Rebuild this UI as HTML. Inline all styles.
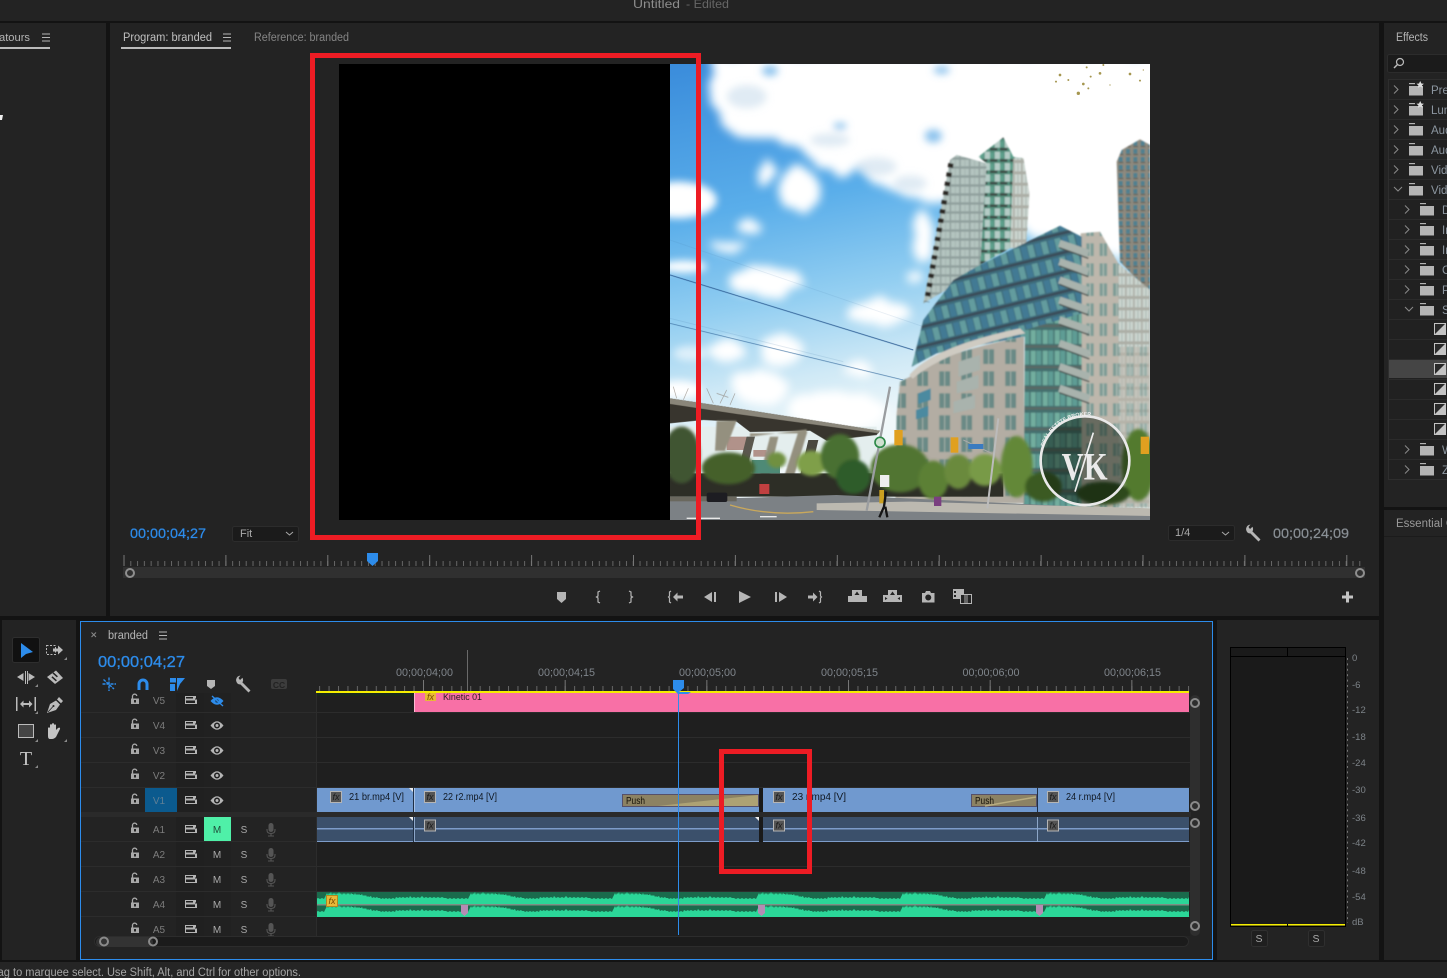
<!DOCTYPE html>
<html><head><meta charset="utf-8"><title>Untitled - Edited</title>
<style>
html,body{margin:0;padding:0;background:#131313;overflow:hidden}
svg{display:block;font-family:"Liberation Sans",sans-serif}
</style></head><body>
<svg width="1447" height="978" viewBox="0 0 1447 978" xmlns="http://www.w3.org/2000/svg">
<defs>
<pattern id="tMin" patternUnits="userSpaceOnUse" x="423" y="686" width="9.445" height="6"><rect width="1" height="5" fill="#666"/></pattern>
<pattern id="tMaj" patternUnits="userSpaceOnUse" x="423" y="680" width="141.67" height="12"><rect width="1" height="12" fill="#777"/></pattern>
<pattern id="mMin" patternUnits="userSpaceOnUse" x="123.5" y="561" width="6.79" height="6"><rect width="1" height="5" fill="#666"/></pattern>
<pattern id="mMaj" patternUnits="userSpaceOnUse" x="123.5" y="555" width="101.9" height="12"><rect width="1" height="11" fill="#777"/></pattern>
<pattern id="dots" patternUnits="userSpaceOnUse" x="0" y="658" width="3" height="5.4"><rect width="2" height="2" fill="#777"/></pattern>
<pattern id="wave" patternUnits="userSpaceOnUse" x="326" y="892" width="144" height="25">
<rect width="144" height="25" fill="#1a6a4c"/>
<path d="M0 12V3L1 1 2 3 3 1 4 2 5 0 6 3 7 1 8 2 9 1 10 3 11 1 12 2 13 0 14 2 15 1 16 3 17 1 18 2 19 1 20 3 21 1 22 2 23 1 24 3 25 1 26 2 27 2 28 3 29 1 30 3 31 2 32 3 33 2 34 3 35 3 36 2 37 4 38 3 39 4 40 3 41 5 42 4 43 5 45 4 46 6 48 5 49 6 51 5 52 6 54 6 55 7 57 6 58 7 60 6 62 7 63 6 65 7 67 6 69 7 70 5 72 6 74 5 75 6 77 5 79 6 81 5 83 6 84 4 86 6 88 5 90 6 92 5 94 6 96 4 98 6 100 5 102 6 104 5 106 6 108 5 110 6 112 5 114 6 116 5 118 6 120 6 122 7 124 6 126 7 128 6 130 7 132 6 134 7 136 6 138 7 140 6 142 7 143 5 144 3V12Z" fill="#2bd698"/>
<path d="M0 25V16L1 14 2 16 3 14 4 15 5 13 6 16 7 14 8 15 9 14 10 16 11 14 12 15 13 13 14 15 15 14 16 16 17 14 18 15 19 14 20 16 21 14 22 15 23 14 24 16 25 14 26 15 27 15 28 16 29 14 30 16 31 15 32 16 33 15 34 16 35 16 36 15 37 17 38 16 39 17 40 16 41 18 42 17 43 18 45 17 46 19 48 18 49 19 51 18 52 19 54 19 55 20 57 19 58 20 60 19 62 20 63 19 65 20 67 19 69 20 70 18 72 19 74 18 75 19 77 18 79 19 81 18 83 19 84 17 86 19 88 18 90 19 92 18 94 19 96 17 98 19 100 18 102 19 104 18 106 19 108 18 110 19 112 18 114 19 116 18 118 19 120 19 122 20 124 19 126 20 128 19 130 20 132 19 134 20 136 19 138 20 140 19 142 20 143 18 144 16V25Z" fill="#2bd698"/>
</pattern>
<linearGradient id="sky" gradientUnits="userSpaceOnUse" x1="60" y1="0" x2="280" y2="1150">
<stop offset="0" stop-color="#3a8cdb"/><stop offset=".4" stop-color="#5aaeea"/><stop offset=".65" stop-color="#92cef1"/><stop offset=".85" stop-color="#cfe9f6"/><stop offset="1" stop-color="#f0f8fa"/>
</linearGradient>
<filter id="cl" filterUnits="userSpaceOnUse" x="-100" y="-100" width="1700" height="1600" color-interpolation-filters="sRGB">
 <feTurbulence type="fractalNoise" baseFrequency=".014" numOctaves="3" seed="4" result="n"/>
 <feDisplacementMap in="SourceGraphic" in2="n" scale="45" xChannelSelector="R" yChannelSelector="G"/>
 <feGaussianBlur stdDeviation="14"/>
</filter>
<filter id="b8" x="-40%" y="-40%" width="180%" height="180%"><feGaussianBlur stdDeviation="12"/></filter>
<filter id="b3" x="-15%" y="-15%" width="130%" height="130%"><feGaussianBlur stdDeviation="5"/></filter>
<filter id="b1" x="-5%" y="-5%" width="110%" height="110%"><feGaussianBlur stdDeviation="2"/></filter>
<pattern id="pGray" patternUnits="userSpaceOnUse" width="29" height="27"><rect width="29" height="27" fill="#8f9f9c"/><rect x="2" y="2" width="25" height="20" fill="#b4c4c0"/><rect x="14" y="2" width="1.500" height="20" fill="#98a8a4"/></pattern>
<pattern id="pTeal" patternUnits="userSpaceOnUse" width="30" height="34"><rect width="30" height="34" fill="#55917e"/><rect x="14" y="3" width="16" height="22" fill="#b5ccc6"/><rect x="0" y="6" width="10" height="16" fill="#5da08c"/><rect y="26" width="22" height="7" fill="#3a443f"/></pattern>
<pattern id="pFar" patternUnits="userSpaceOnUse" width="22" height="24"><rect width="22" height="24" fill="#8f8a7e"/><rect x="4" y="3" width="12" height="14" fill="#4f8090"/><rect x="4" y="18" width="14" height="3" fill="#5c5850"/></pattern>
<pattern id="pGlass" patternUnits="userSpaceOnUse" width="42" height="57" patternTransform="rotate(-14)"><rect width="42" height="57" fill="#3e6c7c"/><rect x="2" y="2" width="18" height="38" fill="#437a94"/><rect x="22" y="2" width="18" height="38" fill="#639c9e"/><rect y="44" width="42" height="8" fill="#3a4c58"/></pattern>
<pattern id="pGlass2" patternUnits="userSpaceOnUse" width="36" height="62"><rect width="36" height="62" fill="#456f6e"/><rect x="2" y="4" width="15" height="42" fill="#72ae9f"/><rect x="19" y="4" width="15" height="42" fill="#5f9c94"/><rect y="50" width="36" height="7" fill="#5c6965"/></pattern>
<pattern id="pWall" patternUnits="userSpaceOnUse" width="66" height="66"><rect width="66" height="66" fill="#b3ada3"/><rect x="16" y="10" width="32" height="44" fill="#6a8a86"/><rect x="31" y="10" width="2" height="44" fill="#c8c6bc"/></pattern>
<pattern id="pCon" patternUnits="userSpaceOnUse" width="40" height="60"><rect width="40" height="60" fill="#bdb7ac"/><rect x="9" y="10" width="22" height="38" fill="#7e9c96"/><rect x="19" y="10" width="2" height="38" fill="#d4d4cc"/></pattern>
<pattern id="pFr" patternUnits="userSpaceOnUse" width="24" height="34"><rect width="24" height="34" fill="#acaea6"/><rect x="2" y="3" width="19" height="25" fill="#ccd6d0"/><rect x="11" y="3" width="1.500" height="25" fill="#8a9a96"/></pattern>
<clipPath id="ph"><rect x="0" y="12" width="1440" height="1368"/></clipPath>

<g id="lock"><path d="M-2.500 0V-2.300A2 2 0 0 1 1.800 -3" fill="none" stroke="#a8a8a8" stroke-width="1.300"/><rect x="-4" y="-.5" width="8" height="5.500" fill="#a8a8a8"/><rect x="-1" y="1" width="2" height="2.500" fill="#232323"/></g>
<g id="sync"><path d="M-5.500 -3H3.500V-.5H-5.500ZM-5.500 .5H5.500V4H-5.500Z" fill="none" stroke="#b5b5b5"/><rect x="2" y="-3.500" width="3" height="2.500" fill="#b5b5b5"/><rect x="4" y=".5" width="2" height="3.500" fill="#b5b5b5"/></g>
<g id="eye"><path d="M-6.500 0Q0 -8.500 6.500 0Q0 8.500 -6.500 0Z" fill="#b5b5b5"/><circle r="3" fill="#222"/><circle r="1.500" fill="#b5b5b5"/></g>
<g id="mic"><rect x="-2.500" y="-6" width="5" height="9" rx="2.500" fill="#555"/><path d="M-4 0V1Q-4 4.500 0 4.500T4 1V0M0 4.500V7M-3 7H3" fill="none" stroke="#555" stroke-width="1.100"/></g>
<g id="fold"><rect x="0" y="2" width="14" height="9.500" fill="#b5b5b5"/><rect x="0" y="-1" width="6" height="1.200" fill="#b5b5b5"/></g>
<g id="trans"><rect x=".5" y=".5" width="11" height="11" fill="#2a2a2a" stroke="#c4c4c4"/><path d="M1 11L11 1V11Z" fill="#c4c4c4"/></g>
<g id="fxg"><rect x="-5.500" y="-5.500" width="11" height="11" fill="#555" stroke="#b5b5b5"/><text x="0" y="3" text-anchor="middle" font-size="9" font-style="italic" fill="#1a1a1a">fx</text></g>
<path id="wr" d="M-1.500 -5.500L-3.500 -3 -2 -1 .5 -3.200Q1.800 -.3 .3 1.300L8.500 9.500 6.500 11.500 -1.500 3.500Q-5.500 3.500 -6 -1Q-5.500 -5 -1.500 -5.500Z" fill="#b5b5b5"/>
</defs>

<rect width="1447" height="978" fill="#131313"/>
<rect width="1447" height="21" fill="#232323"/>
<text x="633" y="8" font-size="12" fill="#8d8d8d" textLength="47" lengthAdjust="spacingAndGlyphs">Untitled</text>
<text x="686" y="8" font-size="12" fill="#666" textLength="43" lengthAdjust="spacingAndGlyphs">- Edited</text>

<rect x="0" y="23" width="106" height="593" fill="#232323"/>
<rect x="110" y="23" width="1269" height="593" fill="#232323"/>
<rect x="1384" y="23" width="63" height="484" fill="#232323"/>
<rect x="1384" y="510" width="63" height="450" fill="#232323"/>
<rect x="2" y="620" width="74" height="340" fill="#232323"/>
<rect x="1217" y="620" width="162" height="340" fill="#232323"/>
<rect x="0" y="962" width="1447" height="16" fill="#252525"/>

<text x="-1" y="41" font-size="11" fill="#b5b5b5" textLength="31" lengthAdjust="spacingAndGlyphs">atours</text>
<path d="M42 34H50M42 37.500H50M42 41H50" stroke="#b5b5b5" stroke-width="1"/>
<rect x="0" y="47" width="50" height="2" fill="#bbb"/>
<path d="M0 115H3L2 120H0Z" fill="#eee"/>

<text x="123" y="41" font-size="11.500" fill="#c0c0c0" textLength="89" lengthAdjust="spacingAndGlyphs">Program: branded</text>
<path d="M223 34H231M223 37.500H231M223 41H231" stroke="#b5b5b5" stroke-width="1"/>
<rect x="121" y="47" width="110" height="2" fill="#bbb"/>
<text x="254" y="41" font-size="11.500" fill="#858585" textLength="95" lengthAdjust="spacingAndGlyphs">Reference: branded</text>

<!-- video -->
<rect x="339" y="64" width="331" height="456" fill="#000"/>
<g transform="translate(670 60) scale(.33333)" clip-path="url(#ph)">
 <rect x="0" y="12" width="1440" height="1368" fill="url(#sky)"/>
 <!-- cloud layers -->
 <g filter="url(#cl)" fill="#fff">
  <path d="M130 -20H1500V640L1070 520 960 460 830 430 760 430 650 390 570 320 500 350 430 300 330 230 190 230 120 120Z"/>
  <ellipse cx="390" cy="385" rx="60" ry="70"/><ellipse cx="285" cy="335" rx="25" ry="36"/>
  <ellipse cx="235" cy="500" rx="34" ry="20"/>
  <ellipse cx="170" cy="555" rx="52" ry="18"/><ellipse cx="290" cy="665" rx="105" ry="50"/>
  <ellipse cx="630" cy="755" rx="90" ry="42"/>
  <ellipse cx="755" cy="530" rx="38" ry="75"/><ellipse cx="740" cy="650" rx="30" ry="18"/>
  <ellipse cx="335" cy="870" rx="66" ry="44"/><ellipse cx="165" cy="875" rx="60" ry="32"/>
  <ellipse cx="265" cy="985" rx="85" ry="55"/><ellipse cx="560" cy="925" rx="44" ry="16"/>
  <ellipse cx="500" cy="1050" rx="150" ry="55"/>
 </g>
 <g filter="url(#b8)">
  <g fill="#fff"><ellipse cx="25" cy="420" rx="115" ry="55"/><ellipse cx="40" cy="620" rx="70" ry="18"/><ellipse cx="25" cy="990" rx="70" ry="28"/><ellipse cx="60" cy="880" rx="50" ry="22" opacity=".6"/></g>
  <g fill="#5aa8e6" opacity=".7"><ellipse cx="790" cy="228" rx="26" ry="20"/><ellipse cx="815" cy="30" rx="24" ry="12"/><ellipse cx="510" cy="198" rx="20" ry="10"/><ellipse cx="300" cy="32" rx="24" ry="16"/></g>
  <g fill="#c2d8ea" opacity=".5"><ellipse cx="230" cy="110" rx="60" ry="35"/><ellipse cx="480" cy="240" rx="60" ry="20"/><ellipse cx="620" cy="320" rx="60" ry="28"/><ellipse cx="720" cy="370" rx="50" ry="24"/></g>
 </g>
 <g fill="none" stroke="#4a78a8">
  <path d="M0 645L730 870" stroke-width="2.500" stroke="#2f5f95"/><path d="M0 790L700 960" stroke-width="2" stroke="#3a6ea0"/>
  <path d="M0 775L520 905" stroke-width="1" opacity=".45"/><path d="M0 540L760 800" stroke-width="1" opacity=".35"/>
 </g>
 <!-- top right branches -->
 <g fill="#a5964f">
  <circle cx="1170" cy="45" r="4"/><circle cx="1158" cy="65" r="3"/><circle cx="1195" cy="60" r="3"/><circle cx="1225" cy="100" r="5"/><circle cx="1240" cy="72" r="4"/><circle cx="1255" cy="85" r="3"/><circle cx="1262" cy="50" r="3"/><circle cx="1250" cy="22" r="3"/><circle cx="1290" cy="40" r="4"/><circle cx="1300" cy="15" r="3"/><circle cx="1320" cy="75" r="2"/><circle cx="1380" cy="42" r="4"/><circle cx="1410" cy="62" r="3"/><circle cx="1420" cy="30" r="2"/>
 </g>
 <!-- bare trees -->
 <g stroke="#8b8278" stroke-width="2" fill="none" opacity=".7"><path d="M20 1015L10 980M40 1020L55 985M130 1030L110 985M150 1030L170 990M180 1035L195 1000M140 1000L175 1012"/></g>

 <g filter="url(#b1)">
 <path d="M1340 305L1355 270 1410 238 1440 255V700L1350 605Z" fill="url(#pFar)"/>
 <path d="M925 290L1000 232 1030 290 1060 295 1078 400 1068 560 1020 565 920 620 950 310Z" fill="url(#pTeal)"/>
 <path d="M1030 295L1060 295 1078 400 1068 560 1020 565Z" fill="url(#pFr)"/>
 <path d="M860 285L950 310 930 620 845 680 760 730 800 520 840 300Z" fill="url(#pGray)"/>
 <path d="M843 310L770 725" stroke="#2a2622" stroke-width="16" stroke-dasharray="13 15" fill="none"/>
 <path d="M1345 610L1440 690V1345H1345Z" fill="url(#pFr)"/>
 <rect x="1345" y="860" width="95" height="480" fill="url(#pCon)" opacity=".55"/>
 <path d="M1232 520L1290 515 1345 610V1345H1232Z" fill="url(#pCon)"/>
 <path d="M725 920L760 780 850 660 920 620 1170 497 1235 530V830H1060L800 880Z" fill="url(#pGlass)"/>
 <path d="M1065 810L1235 760V1340H1060Z" fill="url(#pGlass2)"/>
 <g stroke="#a9b3ad" stroke-width="22" fill="none">
  <path d="M1168 550L1255 580M1168 605L1255 635M1168 660L1255 692M1168 720L1255 750M1168 780L1258 810M1168 850L1258 882M1168 920L1258 950M1168 985L1258 1015"/>
 </g>
 <g stroke="#48504e" stroke-width="4" fill="none">
  <path d="M1168 563L1255 595M1168 618L1255 650M1168 673L1255 707M1168 733L1255 765M1168 793L1258 825M1168 863L1258 897M1168 933L1258 965M1168 998L1258 1030"/>
 </g>
 <path d="M690 965L720 950Q800 880 1062 830V1330H676L680 1060Z" fill="url(#pWall)"/>
 <path d="M718 945Q790 860 1050 805L1066 820Q830 870 728 956Z" fill="#cfcbc2"/>
 <g fill="#a9b3ad"><path d="M865 905L930 885V930L865 950Z"/><path d="M860 965L925 945V985L860 1000Z"/><path d="M850 1025L915 1005V1045L850 1060Z"/></g>
 <g fill="#4b8aa0"><path d="M745 1000L782 985V1020L745 1032Z"/><path d="M738 1050L775 1038V1068L738 1078Z"/></g>
 </g>

 <!-- sky patch under overpass -->
 <rect x="0" y="1100" width="620" height="120" fill="#e4eeee"/>
 <g fill="#9c6c60" opacity=".7"><rect x="170" y="1130" width="60" height="40"/><rect x="250" y="1170" width="40" height="20"/></g>
 <!-- overpass -->
 <path d="M0 1015L200 1045 630 1112 620 1125 470 1142 420 1112 240 1116 200 1085 100 1080 0 1090Z" fill="#38352e"/>
 <path d="M0 1015L200 1045 630 1112 626 1120 200 1062 0 1032Z" fill="#8a867a"/>
 <g fill="#94907f" filter="url(#b1)"><path d="M140 1082H200L165 1172H135Z"/><path d="M240 1120H410V1108L240 1130Z"/><path d="M300 1130H325L285 1305H255Z"/><path d="M385 1115H412L355 1305H325Z"/></g>
 <path d="M415 1140H445L410 1290H380Z" fill="#4a4840"/><path d="M230 1130H255L225 1250H200Z" fill="#5a574e"/>
 <rect x="0" y="1240" width="1000" height="70" fill="#2d2e26"/>
 <rect x="245" y="1200" width="85" height="40" fill="#4e8a76"/>
 <!-- trees -->
 <g filter="url(#b3)">
  <ellipse cx="35" cy="1185" rx="55" ry="85" fill="#3f5530"/><ellipse cx="175" cy="1225" rx="80" ry="48" fill="#44602c"/>
  <ellipse cx="425" cy="1210" rx="45" ry="38" fill="#7f9f48"/><ellipse cx="320" cy="1200" rx="28" ry="24" fill="#6f9040"/>
  <ellipse cx="510" cy="1190" rx="58" ry="68" fill="#4a7030"/><ellipse cx="550" cy="1250" rx="52" ry="52" fill="#2f5c2c"/>
  <ellipse cx="690" cy="1225" rx="88" ry="72" fill="#517530"/><ellipse cx="790" cy="1260" rx="45" ry="58" fill="#5c8036"/>
  <ellipse cx="865" cy="1235" rx="42" ry="52" fill="#6a8a3e"/><ellipse cx="945" cy="1230" rx="48" ry="48" fill="#789a46"/>
  <ellipse cx="1040" cy="1220" rx="48" ry="92" fill="#638838"/><ellipse cx="1120" cy="1280" rx="55" ry="45" fill="#3a5a22"/>
  <ellipse cx="1405" cy="1215" rx="50" ry="108" fill="#527a2e"/><ellipse cx="1300" cy="1300" rx="80" ry="35" fill="#2f4a1e"/>
 </g>
 <!-- road -->
 <path d="M0 1320L500 1305 1440 1350V1380H0Z" fill="#7c8185"/>
 <path d="M440 1330L720 1325 1440 1345V1368L1000 1360 440 1350Z" fill="#bcb9b0"/>
 <path d="M180 1335Q300 1370 430 1355" stroke="#c9a85c" stroke-width="4" fill="none"/>
 <path d="M50 1375H150M270 1370H320" stroke="#e8e8e8" stroke-width="4"/>
 <rect x="0" y="1310" width="200" height="14" fill="#6a685e"/>
 <!-- street furniture -->
 <path d="M660 980L590 1352" stroke="#9a9da0" stroke-width="7"/><circle cx="630" cy="1147" r="15" fill="#cfe0d0" stroke="#2f8a4a" stroke-width="5"/>
 <path d="M985 1075L952 1345" stroke="#bbb" stroke-width="6"/><path d="M880 1140L965 1180" stroke="#aaa" stroke-width="3"/><rect x="895" y="1152" width="45" height="15" fill="#3a7bc0"/>
 <rect x="673" y="1110" width="25" height="46" fill="#e0a020"/><rect x="842" y="1132" width="23" height="46" fill="#e0a020"/><rect x="1412" y="1130" width="25" height="52" fill="#e0a020"/>
 <rect x="630" y="1245" width="28" height="36" fill="#eee"/><rect x="110" y="1298" width="62" height="28" rx="6" fill="#1d1d22"/><rect x="268" y="1272" width="30" height="30" fill="#c04040"/>
 <rect x="628" y="1290" width="14" height="40" fill="#caa020"/>
 <path d="M648 1295L642 1340 628 1372M646 1340L652 1372" stroke="#151515" stroke-width="7" fill="none"/>
 <rect x="792" y="1310" width="22" height="28" fill="#7a3f80"/>
 <!-- logo -->
 <circle cx="1245" cy="1202" r="132" fill="#0d1a0c" opacity=".48"/>
 <circle cx="1245" cy="1202" r="133" fill="none" stroke="#e9e9e9" stroke-width="8"/>
 <text x="1175" y="1258" font-family="Liberation Serif,serif" font-size="118" font-weight="700" fill="#eaeaea" textLength="138" lengthAdjust="spacingAndGlyphs">VK</text>
 <path d="M1270 1118L1215 1295" stroke="#eee" stroke-width="5"/>
 <path id="arcT" d="M1122 1160A130 130 0 0 1 1258 1068" fill="none"/>
 <text font-size="16" font-weight="700" fill="#eee"><textPath href="#arcT">REAL ESTATE BROKER</textPath></text>
</g>

<rect x="312.500" y="55.500" width="386" height="482" fill="none" stroke="#ed1c24" stroke-width="5"/>

<!-- monitor footer -->
<text x="130" y="538" font-size="14" fill="#2d8ceb" stroke="#2d8ceb" stroke-width=".25" textLength="76" lengthAdjust="spacingAndGlyphs">00;00;04;27</text>
<rect x="232.500" y="526.500" width="66" height="15" rx="2" fill="#1b1b1b" stroke="#2c2c2c"/>
<text x="240" y="537" font-size="11" fill="#aaa">Fit</text>
<path d="M286 532L289.500 535 293 532" fill="none" stroke="#aaa"/>
<rect x="1168.500" y="525.500" width="66" height="15" rx="2" fill="#1b1b1b" stroke="#2c2c2c"/>
<text x="1175" y="536" font-size="11" fill="#aaa">1/4</text>
<path d="M1222 532L1225.500 535 1229 532" fill="none" stroke="#aaa"/>
<use href="#wr" x="1252" y="530"/>
<text x="1273" y="538" font-size="14" fill="#8a9096" stroke="#8a9096" stroke-width=".2" textLength="76" lengthAdjust="spacingAndGlyphs">00;00;24;09</text>

<rect x="123" y="561" width="1242" height="6" fill="url(#mMin)"/>
<rect x="123" y="555" width="1242" height="12" fill="url(#mMaj)"/>
<rect x="123" y="567" width="1242" height="11" fill="#303030"/>
<circle cx="130" cy="573" r="4" fill="none" stroke="#8f8f8f" stroke-width="2"/>
<circle cx="1360" cy="573" r="4" fill="none" stroke="#8f8f8f" stroke-width="2"/>
<path d="M367 553H378V561L372.500 566 367 561Z" fill="#2d8ceb"/>

<!-- transport -->
<g fill="#b5b5b5" stroke="none">
 <path d="M557 592H566V599L561.500 603 557 599Z"/>
 <path d="M600 591L598 592V596L596.500 597 598 598V602L600 603" fill="none" stroke="#b5b5b5" stroke-width="1.200"/>
 <path d="M629 591L631 592V596L632.500 597 631 598V602L629 603" fill="none" stroke="#b5b5b5" stroke-width="1.200"/>
 <path d="M671 591L669.500 592V596L668.500 597 669.500 598V602L671 603" fill="none" stroke="#b5b5b5" stroke-width="1.200"/>
 <path d="M673 597L677.500 592.500V595.500H683V598.500H677.500V601.500Z"/>
 <path d="M704 597L712 592V602ZM714 592H716V602H714Z"/>
 <path d="M739 591L751 597 739 603Z"/>
 <path d="M775 592H777V602H775ZM779 592L787 597 779 602Z"/>
 <path d="M808 595.500H813V592.500L817.500 597 813 601.500V598.500H808Z"/>
 <path d="M819 591L820.500 592V596L821.500 597 820.500 598V602L819 603" fill="none" stroke="#b5b5b5" stroke-width="1.200"/>
 <path d="M852 590H862V596H867V602H848V596H852ZM857 591.500L854.500 595H859.500Z" fill-rule="evenodd"/>
 <path d="M888 590H897V595H902V602H883V595H888ZM892.500 591.500L890 595H895ZM885 597V600L887.500 598.500ZM900 597V600L897.500 598.500Z" fill-rule="evenodd"/>
 <path d="M922 593H925L926 591H930L931 593H934.500V602.500H922ZM928.200 594.500A3 3 0 1 0 928.300 600.500A3 3 0 1 0 928.200 594.500Z" fill-rule="evenodd"/>
 <path d="M953 589H964V599H953Z"/><path d="M954 591H956V593H954ZM954 595H956V597H954Z" fill="#232323"/>
 <rect x="960.500" y="594.500" width="11" height="9" fill="#232323" stroke="#b5b5b5"/><path d="M964 595H968V603H964Z" fill="#666"/>
 <path d="M1346 591.500H1349V595.500H1353V598.500H1349V602.500H1346V598.500H1342V595.500H1346Z" fill="#c4c4c4"/>
</g>

<!-- effects -->
<text x="1396" y="41" font-size="11.500" fill="#b5b5b5" textLength="32" lengthAdjust="spacingAndGlyphs">Effects</text>
<rect x="1387.500" y="54.500" width="70" height="18" rx="2" fill="#1b1b1b" stroke="#2c2c2c"/>
<circle cx="1400" cy="62" r="3.500" fill="none" stroke="#bbb" stroke-width="1.200"/><path d="M1397.500 64.500L1394 68" stroke="#bbb" stroke-width="1.500"/>
<rect x="1388.500" y="79.500" width="70" height="400" fill="#212121" stroke="#2e2e2e"/>
<rect x="1389" y="360" width="58" height="18" fill="#454545"/>
<g stroke="#2b2b2b" fill="none"><path d="M1389 99.500H1447M1389 119.500H1447M1389 139.500H1447M1389 159.500H1447M1389 179.500H1447M1389 199.500H1447M1389 219.500H1447M1389 239.500H1447M1389 259.500H1447M1389 279.500H1447M1389 299.500H1447M1389 319.500H1447M1389 339.500H1447M1389 359.500H1447M1389 379.500H1447M1389 399.500H1447M1389 419.500H1447M1389 439.500H1447M1389 459.500H1447"/></g>
<g fill="none" stroke="#8a8a8a" stroke-width="1">
 <path d="M1394 85.500L1398 89.500 1394 93.500M1394 105.500L1398 109.500 1394 113.500M1394 125.500L1398 129.500 1394 133.500M1394 145.500L1398 149.500 1394 153.500M1394 165.500L1398 169.500 1394 173.500M1394 187L1398 191 1402 187"/>
 <path d="M1405 205.500L1409 209.500 1405 213.500M1405 225.500L1409 229.500 1405 233.500M1405 245.500L1409 249.500 1405 253.500M1405 265.500L1409 269.500 1405 273.500M1405 285.500L1409 289.500 1405 293.500M1405 307L1409 311 1413 307M1405 445.500L1409 449.500 1405 453.500M1405 465.500L1409 469.500 1405 473.500"/>
</g>
<use href="#fold" x="1409" y="84"/><use href="#fold" x="1409" y="104"/><use href="#fold" x="1409" y="124"/><use href="#fold" x="1409" y="144"/><use href="#fold" x="1409" y="164"/><use href="#fold" x="1409" y="184"/>
<use href="#fold" x="1420" y="204"/><use href="#fold" x="1420" y="224"/><use href="#fold" x="1420" y="244"/><use href="#fold" x="1420" y="264"/><use href="#fold" x="1420" y="284"/><use href="#fold" x="1420" y="304"/><use href="#fold" x="1420" y="444"/><use href="#fold" x="1420" y="464"/>
<path d="M1419 83.500l1.200 -2.500 1.200 2.500 2.500 .2 -1.900 1.700 .6 2.500 -2.400 -1.300 -2.400 1.300 .6 -2.500 -1.900 -1.700z" fill="#ddd"/>
<path d="M1419 103.500l1.200 -2.500 1.200 2.500 2.500 .2 -1.900 1.700 .6 2.500 -2.400 -1.300 -2.400 1.300 .6 -2.500 -1.900 -1.700z" fill="#ddd"/>
<use href="#trans" x="1434" y="323"/><use href="#trans" x="1434" y="343"/><use href="#trans" x="1434" y="363"/><use href="#trans" x="1434" y="383"/><use href="#trans" x="1434" y="403"/><use href="#trans" x="1434" y="423"/>
<g font-size="11.500" fill="#8c96a0">
 <text x="1431" y="94">Presets</text><text x="1431" y="114">Lumetri Presets</text><text x="1431" y="134">Audio Effects</text><text x="1431" y="154">Audio Transitions</text><text x="1431" y="174">Video Effects</text><text x="1431" y="194">Video Transitions</text>
 <text x="1442" y="214">Dissolve</text><text x="1442" y="234">Immersive</text><text x="1442" y="254">Iris</text><text x="1442" y="274">Cross</text><text x="1442" y="294">Page Peel</text><text x="1442" y="314">Slide</text><text x="1442" y="454">Wipe</text><text x="1442" y="474">Zoom</text>
</g>
<rect x="1384" y="507" width="63" height="3" fill="#131313"/>
<text x="1396" y="527" font-size="11.500" fill="#9a9a9a">Essential Graphics</text>
<rect x="1384" y="536" width="63" height="1" fill="#1b1b1b"/>

<!-- tools -->
<rect x="12.500" y="637.500" width="27" height="25" rx="2" fill="#111" stroke="#2e2e2e"/>
<path d="M21 643V658L26 654 33 652Z" fill="#2d8ceb"/>
<rect x="46.500" y="645.500" width="9" height="9" fill="none" stroke="#bbb" stroke-dasharray="2 1.500"/>
<path d="M53 648.500H58V645.500L63 650 58 654.500V651.500H53Z" fill="#bbb"/>
<g fill="#bbb">
 <path d="M17 677L23.500 673V681ZM35 677L28.500 673V681Z"/><rect x="25" y="671" width="1" height="13"/><rect x="27" y="671" width="1" height="13"/>
 <path d="M56 670.500L63 678 55 684 47 677Z"/><rect x="52" y="674" width="6" height="1.500" fill="#232323" transform="rotate(42 55 675)"/><rect x="51" y="678" width="6" height="1.500" fill="#232323" transform="rotate(42 54 679)"/>
 <rect x="16" y="697" width="1.500" height="14"/><rect x="34.500" y="697" width="1.500" height="14"/><path d="M20 704L23.500 700.500V703H29V700.500L32.500 704 29 707.500V705H23.500V707.500Z"/>
 <path d="M47 713L50 704 56 700.500 60 704.500 56 710ZM57 699.500L59 697 63 701 61 703.300Z" fill-rule="evenodd"/><circle cx="53.500" cy="706" r="1" fill="#232323"/><path d="M48 712L53 706.500" stroke="#232323" stroke-width=".8"/>
</g>
<rect x="18.500" y="724.500" width="15" height="13" fill="#444" stroke="#bbb"/>
<path d="M48 733V728Q49 726.500 50 728V725Q51 723 52 725V724Q53 722 54 724V725Q55 723.500 56 725V730L58 728Q60.500 727 60 729L56 737Q54 739 52 739H50Q48 739 48 736Z" fill="#c4c4c4"/>
<text x="26" y="765" text-anchor="middle" font-family="Liberation Serif,serif" font-size="20" fill="#c4c4c4">T</text>
<g fill="#8a8a8a">
 <path d="M67 657V660H64Z"/><path d="M38 684V687H35Z"/><path d="M38 711V714H35Z"/><path d="M38 739V742H35Z"/><path d="M67 739V742H64Z"/><path d="M38 765V768H35Z"/>
</g>

<!-- timeline frame -->
<rect x="80.500" y="621.500" width="1132" height="338" fill="#232323" stroke="#2d8ceb"/>
<path d="M91.500 632.500L96 637M96 632.500L91.500 637" stroke="#8a8a8a"/>
<text x="108" y="639" font-size="11.500" fill="#b5b5b5" textLength="40" lengthAdjust="spacingAndGlyphs">branded</text>
<path d="M159 632H167M159 635.500H167M159 639H167" stroke="#b5b5b5"/>
<text x="98" y="667" font-size="16" fill="#2d8ceb" stroke="#2d8ceb" stroke-width=".3" textLength="87" lengthAdjust="spacingAndGlyphs">00;00;04;27</text>

<!-- header icons -->
<g fill="#2d8ceb">
 <path d="M109 677.500V691M102.500 684H116M103.500 679.500L114 689" stroke="#2d8ceb" stroke-width="1.400" stroke-dasharray="3 1" fill="none"/>
 <path d="M137.500 690V684A5.500 5.500 0 0 1 148.500 684V690H145.500V684A2.500 2.500 0 0 0 140.500 684V690Z"/>
 <path d="M170 678H176V682.500H170ZM170 684H175V691H170ZM177 678H185L180 684 177 691Z"/>
</g>
<path d="M207 680H215V686L211 689 207 686Z" fill="#b5b5b5"/>
<use href="#wr" x="242" y="681"/>
<rect x="271" y="679" width="16" height="10" rx="2" fill="#3c3c3c"/>
<text x="279" y="688" text-anchor="middle" font-size="8.500" font-weight="700" fill="#222">CC</text>

<!-- track rows -->
<rect x="81" y="693" width="235" height="243" fill="#232323"/>
<rect x="317" y="693" width="873" height="243" fill="#1f1f1f"/>
<rect x="176" y="693" width="28" height="243" fill="#1f1f1f" opacity=".7"/>
<rect x="204" y="693" width="27" height="119" fill="#1f1f1f" opacity=".6"/>
<rect x="204" y="817" width="27" height="119" fill="#1f1f1f" opacity=".6"/>
<g stroke="#2c2c2c"><path d="M81 712.500H1190M81 737.500H1190M81 762.500H1190M81 787.500H1190M81 841.500H1190M81 866.500H1190M81 891.500H1190M81 916.500H1190"/></g>
<rect x="316" y="693" width="1" height="243" fill="#2c2c2c"/>
<rect x="81" y="812" width="1110" height="5" fill="#2a2a2a"/>
<rect x="145" y="788" width="32" height="24" fill="#0b5a8e"/>
<rect x="204" y="817" width="27" height="24" fill="#4ff0a8"/>

<use href="#lock" x="135" y="699"/><use href="#lock" x="135" y="724"/><use href="#lock" x="135" y="749"/><use href="#lock" x="135" y="774"/><use href="#lock" x="135" y="799"/>
<use href="#lock" x="135" y="828"/><use href="#lock" x="135" y="853"/><use href="#lock" x="135" y="878"/><use href="#lock" x="135" y="903"/><use href="#lock" x="135" y="928"/>
<use href="#sync" x="191" y="699.500"/><use href="#sync" x="191" y="724.500"/><use href="#sync" x="191" y="749.500"/><use href="#sync" x="191" y="774.500"/><use href="#sync" x="191" y="799.500"/>
<use href="#sync" x="191" y="828.500"/><use href="#sync" x="191" y="853.500"/><use href="#sync" x="191" y="878.500"/><use href="#sync" x="191" y="903.500"/><use href="#sync" x="191" y="928.500"/>
<path d="M210.500 701Q217 693.500 223.500 701Q217 708.500 210.500 701Z" fill="#2d8ceb"/><circle cx="217" cy="701" r="1.800" fill="#1a4a78"/><path d="M212 696L223 706" stroke="#2d8ceb" stroke-width="1.300"/>
<use href="#eye" x="217" y="725.500"/><use href="#eye" x="217" y="750.500"/><use href="#eye" x="217" y="775.500"/><use href="#eye" x="217" y="800.500"/>
<use href="#mic" x="271" y="829"/><use href="#mic" x="271" y="854"/><use href="#mic" x="271" y="879"/><use href="#mic" x="271" y="904"/><use href="#mic" x="271" y="929"/>
<g font-size="10" fill="#7d7d7d" text-anchor="middle">
 <text x="159" y="704">V5</text><text x="159" y="729">V4</text><text x="159" y="754">V3</text><text x="159" y="779">V2</text><text x="159" y="804" fill="#5f7f95">V1</text>
 <text x="159" y="833">A1</text><text x="159" y="858">A2</text><text x="159" y="883">A3</text><text x="159" y="908">A4</text><text x="159" y="933">A5</text>
</g>
<g font-size="10" fill="#aaa" text-anchor="middle">
 <text x="217" y="833" fill="#1f4d3a">M</text><text x="217" y="858">M</text><text x="217" y="883">M</text><text x="217" y="908">M</text><text x="217" y="933">M</text>
 <text x="244" y="833">S</text><text x="244" y="858">S</text><text x="244" y="883">S</text><text x="244" y="908">S</text><text x="244" y="933">S</text>
</g>

<!-- ruler -->
<g font-size="11" fill="#7f858b" text-anchor="middle">
 <text x="424.500" y="676" textLength="57" lengthAdjust="spacingAndGlyphs">00;00;04;00</text>
 <text x="566.500" y="676" textLength="57" lengthAdjust="spacingAndGlyphs">00;00;04;15</text>
 <text x="707.500" y="676" textLength="57" lengthAdjust="spacingAndGlyphs">00;00;05;00</text>
 <text x="849.500" y="676" textLength="57" lengthAdjust="spacingAndGlyphs">00;00;05;15</text>
 <text x="991" y="676" textLength="57" lengthAdjust="spacingAndGlyphs">00;00;06;00</text>
 <text x="1132.500" y="676" textLength="57" lengthAdjust="spacingAndGlyphs">00;00;06;15</text>
</g>
<rect x="317" y="686" width="873" height="6" fill="url(#tMin)"/>
<rect x="317" y="680" width="873" height="12" fill="url(#tMaj)"/>
<rect x="467" y="650" width="1" height="42" fill="#6a6a6a"/>

<!-- V5 pink -->
<rect x="317" y="693" width="97" height="3" fill="#16281c"/>
<rect x="414" y="693" width="775" height="19" fill="#f870a6"/>
<rect x="414" y="693" width="1" height="19" fill="#ffb8d2"/>
<rect x="425" y="693" width="11" height="8" fill="#e8b838"/><text x="430.500" y="700" text-anchor="middle" font-size="9" font-style="italic" fill="#7a4a00">fx</text>
<text x="443" y="700" font-size="9.500" fill="#2a1a20" textLength="39" lengthAdjust="spacingAndGlyphs">Kinetic 01</text>
<rect x="316" y="691" width="873" height="2" fill="#f5ee00"/>

<!-- V1 clips -->
<rect x="317" y="788" width="442" height="24" fill="#7099cf"/>
<rect x="763" y="788" width="426" height="24" fill="#7099cf"/>
<rect x="413" y="788" width="1" height="24" fill="#1f2f45"/><rect x="414" y="788" width="1" height="24" fill="#a8c2e6"/>
<rect x="759" y="788" width="4" height="24" fill="#1a1a1a"/>
<rect x="1037" y="788" width="1" height="24" fill="#1f2f45"/>
<path d="M409 788H413V792Z" fill="#eee"/>
<use href="#fxg" x="336" y="797"/><use href="#fxg" x="430" y="797"/><use href="#fxg" x="779" y="797"/><use href="#fxg" x="1053" y="797"/>
<g font-size="10.500" fill="#101822">
 <text x="349" y="800" textLength="55" lengthAdjust="spacingAndGlyphs">21 br.mp4 [V]</text>
 <text x="443" y="800" textLength="54" lengthAdjust="spacingAndGlyphs">22 r2.mp4 [V]</text>
 <text x="792" y="800" textLength="54" lengthAdjust="spacingAndGlyphs">23 r.mp4 [V]</text>
 <text x="1066" y="800" textLength="49" lengthAdjust="spacingAndGlyphs">24 r.mp4 [V]</text>
</g>
<rect x="622.500" y="794.500" width="136" height="12" fill="#8c8263" stroke="#55506a"/>
<path d="M658 806L758 795V806Z" fill="#ada274"/>
<text x="626" y="804" font-size="10.500" fill="#161208" textLength="19" lengthAdjust="spacingAndGlyphs">Push</text>
<rect x="971.500" y="794.500" width="65" height="12" fill="#8c8263" stroke="#55506a"/>
<path d="M985 806L1036 797" stroke="#b8ac80" stroke-width="1.500"/>
<text x="975" y="804" font-size="10.500" fill="#161208" textLength="19" lengthAdjust="spacingAndGlyphs">Push</text>

<!-- A1 clips -->
<rect x="317" y="817" width="442" height="24" fill="#3b506b"/>
<rect x="763" y="817" width="426" height="24" fill="#3b506b"/>
<rect x="317" y="828" width="442" height="1.500" fill="#7d9cc9"/>
<rect x="763" y="828" width="426" height="1.500" fill="#7d9cc9"/>
<rect x="317" y="841" width="442" height="1" fill="#7d9cc9"/><rect x="763" y="841" width="426" height="1" fill="#7d9cc9"/>
<rect x="759" y="817" width="4" height="25" fill="#1a1a1a"/>
<rect x="413" y="817" width="1" height="25" fill="#1f2f45"/><rect x="414" y="817" width="1" height="25" fill="#8ca6c8"/>
<rect x="1037" y="817" width="1" height="25" fill="#8ca6c8"/>
<path d="M409 817H413V821Z" fill="#eee"/><path d="M755 817H759V821Z" fill="#eee"/>
<use href="#fxg" x="430" y="825.500"/><use href="#fxg" x="779" y="825.500"/><use href="#fxg" x="1053" y="825.500"/>

<!-- A4 wave -->
<rect x="317" y="892" width="872" height="25" fill="url(#wave)"/>
<rect x="317" y="904" width="872" height="1.500" fill="#7d8f85"/>
<path d="M461 905H468V913L464.500 916 461 913Z" fill="#b48cb4"/>
<path d="M758 905H765V913L761.500 916 758 913Z" fill="#b48cb4"/>
<path d="M1036 905H1043V913L1039.500 916 1036 913Z" fill="#b48cb4"/>
<rect x="326.500" y="895.500" width="11" height="11" fill="#e8b838" stroke="#b08820"/><text x="332" y="904" text-anchor="middle" font-size="9" font-style="italic" fill="#7a4a00">fx</text>

<rect x="721.500" y="751.500" width="88" height="120" fill="none" stroke="#ed1c24" stroke-width="5"/>

<rect x="678" y="690" width="1" height="245" fill="#2d8ceb"/>
<path d="M673 680H684V688L679 692H691L688 694H678L673 689Z" fill="#2d8ceb"/>

<!-- scrollbars -->
<rect x="1190" y="695" width="10" height="116" rx="5" fill="#2e2e2e"/>
<rect x="1190" y="818" width="10" height="118" rx="5" fill="#2e2e2e"/>
<circle cx="1195" cy="703" r="4" fill="none" stroke="#8a8a8a" stroke-width="2"/>
<circle cx="1195" cy="806" r="4" fill="none" stroke="#8a8a8a" stroke-width="2"/>
<circle cx="1195" cy="823" r="4" fill="none" stroke="#8a8a8a" stroke-width="2"/>
<circle cx="1195" cy="926" r="4" fill="none" stroke="#8a8a8a" stroke-width="2"/>
<rect x="94.500" y="936.500" width="1094" height="10" rx="5" fill="#1b1b1b" stroke="#2c2c2c"/>
<rect x="96" y="937" width="57" height="10" rx="5" fill="#333"/>
<circle cx="104" cy="941.500" r="4" fill="none" stroke="#8a8a8a" stroke-width="2"/>
<circle cx="153" cy="941.500" r="4" fill="none" stroke="#8a8a8a" stroke-width="2"/>

<!-- audio meter -->
<rect x="1230.500" y="647.500" width="115" height="279" fill="#1a1a1a" stroke="#000"/>
<path d="M1231 656.500H1345M1287.500 647V656" stroke="#000"/>
<rect x="1231" y="924" width="114" height="1.500" fill="#f5ee00"/><rect x="1287" y="924" width="1" height="2" fill="#000"/>
<rect x="1346" y="658" width="2" height="265" fill="url(#dots)"/>
<g font-size="9.500" fill="#7d8388">
 <text x="1352" y="661">0</text><text x="1352" y="688">-6</text><text x="1352" y="713">-12</text><text x="1352" y="740">-18</text><text x="1352" y="766">-24</text><text x="1352" y="793">-30</text><text x="1352" y="821">-36</text><text x="1352" y="846">-42</text><text x="1352" y="874">-48</text><text x="1352" y="900">-54</text><text x="1352" y="925">dB</text>
</g>
<rect x="1251.500" y="930.500" width="16" height="16" rx="2" fill="#1f1f1f" stroke="#2f2f2f"/>
<rect x="1308.500" y="930.500" width="16" height="16" rx="2" fill="#1f1f1f" stroke="#2f2f2f"/>
<text x="1259" y="942" text-anchor="middle" font-size="10.500" fill="#aaa">S</text>
<text x="1316" y="942" text-anchor="middle" font-size="10.500" fill="#aaa">S</text>

<text x="-14" y="976" font-size="11.500" fill="#a5a5a5" textLength="315" lengthAdjust="spacingAndGlyphs">Drag to marquee select. Use Shift, Alt, and Ctrl for other options.</text>
</svg>
</body></html>
